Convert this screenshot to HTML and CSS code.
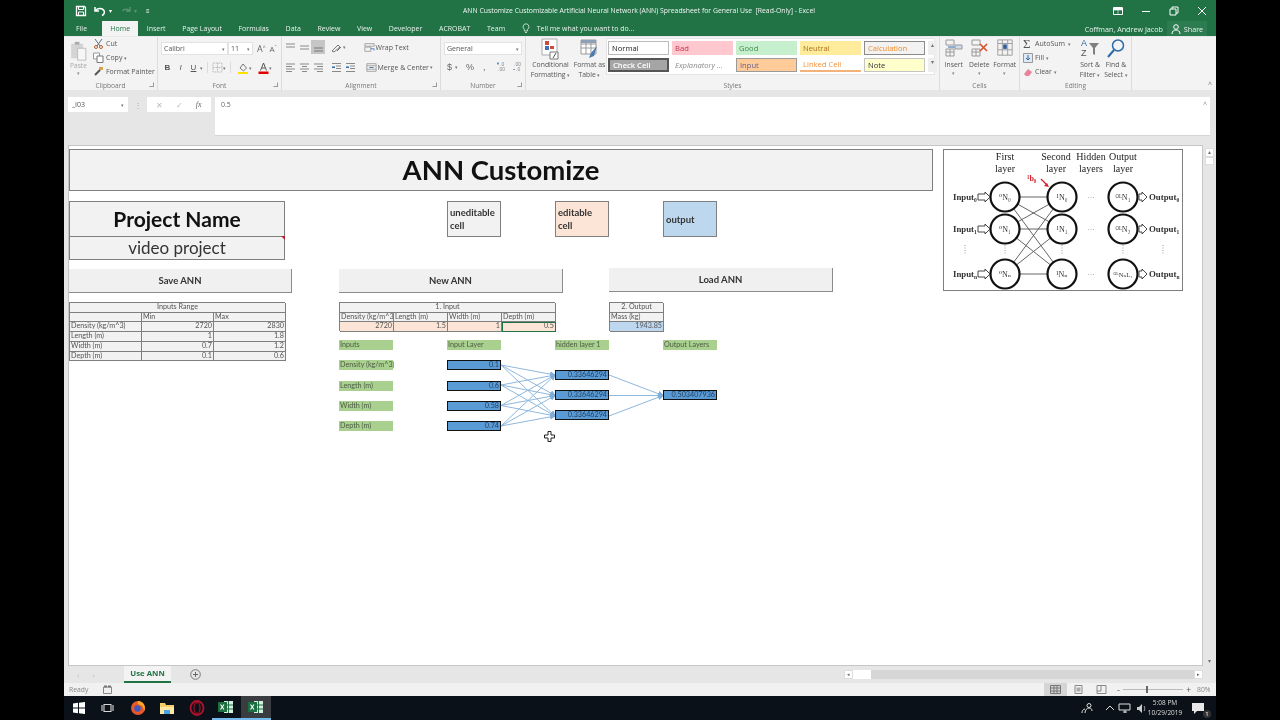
FILE: index.html
```html
<!DOCTYPE html>
<html lang="en">
<head>
<meta charset="utf-8">
<title>ANN Customize - Excel</title>
<link rel="stylesheet" href="styles.css">
</head>
<body>
<div class="app">
  <header class="titlebar">
    <div class="qat">
      <svg width="12" height="12" viewBox="0 0 12 12"><path d="M1.500 1.500h8l1 1v8h-9z" fill="none" stroke="#fff" stroke-width="1.300"/><path d="M3.500 2v2.500h5V2M3.500 10.500V7h5v3.500" fill="none" stroke="#fff"/></svg>
      <svg class="undo" width="14" height="12" viewBox="0 0 14 12"><path d="M2 2v4h4M2.500 6C4 3 9 2.500 11 5.500c1 2 0 4-2 5" fill="none" stroke="#fff" stroke-width="1.500"/></svg>
      <span class="caret-w">▾</span>
      <svg class="redo" width="12" height="12" viewBox="0 0 12 12"><path d="M10 2v4H6M9.500 6C8 3.500 4 3.500 2.500 6" fill="none" stroke="#5f9378" stroke-width="1.300"/></svg>
      <span class="caret-dim">▾</span>
      <span class="caret-w qat-more">≡</span>
    </div>
    <div class="doc-title">ANN Customize Customizable Artificial Neural Network (ANN) Spreadsheet for General Use&nbsp; [Read-Only] - Excel</div>
    <div class="winctl">
      <svg width="10" height="10" viewBox="0 0 10 10"><path d="M.5 1.500h9v7h-9z" fill="none" stroke="#fff"/><path d="M1 2h8v2H1zM5 4v4" fill="#fff" stroke="#fff" stroke-width=".6"/></svg>
      <svg width="10" height="10" viewBox="0 0 10 10"><path d="M1 5.500h8" stroke="#fff"/></svg>
      <svg width="10" height="10" viewBox="0 0 10 10"><path d="M1 3h6v6H1zM3 3V1h6v6H7" fill="none" stroke="#fff"/></svg>
      <svg width="10" height="10" viewBox="0 0 10 10"><path d="M1 1l8 8M9 1L1 9" stroke="#fff"/></svg>
    </div>
  </header>

  <nav class="tabs">
    <span class="tab tab-file">File</span>
    <span class="tab tab-active">Home</span>
    <span class="tab">Insert</span>
    <span class="tab">Page Layout</span>
    <span class="tab">Formulas</span>
    <span class="tab">Data</span>
    <span class="tab">Review</span>
    <span class="tab">View</span>
    <span class="tab">Developer</span>
    <span class="tab">ACROBAT</span>
    <span class="tab">Team</span>
    <span class="tab tell">
      <svg width="8" height="11" viewBox="0 0 8 11"><path d="M4 .8a3 3 0 0 0-1.600 5.500V8h3.200V6.300A3 3 0 0 0 4 .8zM3 9.500h2" fill="none" stroke="#e4efe9" stroke-width=".8"/></svg>
      Tell me what you want to do...
    </span>
    <span class="user">Coffman, Andrew Jacob</span>
    <span class="share">
      <svg width="10" height="10" viewBox="0 0 10 10"><circle cx="5" cy="3" r="2.300" fill="none" stroke="#fff"/><path d="M1 10c0-3 2-4 4-4s4 1 4 4" fill="none" stroke="#fff"/></svg>
      Share
    </span>
  </nav>

  <section class="ribbon">
    <div class="group g-clipboard">
      <div class="group-body">
        <div class="paste">
          <svg width="17" height="22" viewBox="0 0 18 24"><path d="M1 4h13v16H1z" fill="#d4d4d4"/><path d="M5 2h5v3H5z" fill="#aaa"/><path d="M8 9h9v13H8z" fill="#f6f6f6" stroke="#bbb"/></svg>
          <span>Paste</span>
          <span class="tiny-caret">▾</span>
        </div>
        <div class="rows clip-rows">
          <div class="cmd"><svg width="11" height="11" viewBox="0 0 11 11"><path d="M2 1l5 7M9 1L4 8" stroke="#5a6f8a"/><circle cx="3" cy="9" r="1.500" fill="none" stroke="#b06030"/><circle cx="8" cy="9" r="1.500" fill="none" stroke="#b06030"/></svg>Cut</div>
          <div class="cmd"><svg width="11" height="11" viewBox="0 0 11 11"><path d="M.5 1h6v6h-6z" fill="#fff" stroke="#999"/><path d="M4 4h6v6.500H4z" fill="#fff" stroke="#777"/></svg>Copy <i class="dd">▾</i></div>
          <div class="cmd"><svg width="11" height="11" viewBox="0 0 11 11"><path d="M6 1h4v3H6z" fill="#d9a441"/><path d="M7 4L2 9" stroke="#555" stroke-width="2"/></svg>Format Painter</div>
        </div>
      </div>
      <div class="group-label">Clipboard<i class="launcher"></i></div>
    </div>

    <div class="group g-font">
      <div class="group-body rows">
        <div class="inline">
          <span class="field f-font">Calibri<i class="dd">▾</i></span>
          <span class="field f-size">11<i class="dd">▾</i></span>
          <span class="glyph grow">A<sup>^</sup></span>
          <span class="glyph shrink">A<sup>ˇ</sup></span>
        </div>
        <div class="inline font-row2">
          <b class="fmt">B</b><i class="fmt">I</i><u class="fmt">U</u><i class="dd">▾</i>
          <span class="vsep"></span>
          <svg width="11" height="11" viewBox="0 0 11 11"><path d="M1 1h9v9H1zM5.500 1v9M1 5.500h9" fill="none" stroke="#bbb" stroke-dasharray="1 .5"/></svg><i class="dd">▾</i>
          <span class="vsep vsep-wide"></span>
          <svg width="12" height="12" viewBox="0 0 12 12"><path d="M3 6l3-4 3.500 4-3 3z" fill="none" stroke="#777"/><path d="M1 10h10v2H1z" fill="#ffe100"/></svg><i class="dd">▾</i>
          <svg class="fc" width="11" height="12" viewBox="0 0 11 12"><path d="M2.500 8.500L5.500 1l3 7.500M4 6h3" fill="none" stroke="#555"/><path d="M.5 9.500h10V12H.5z" fill="#e00000"/></svg><i class="dd">▾</i>
        </div>
      </div>
      <div class="group-label">Font<i class="launcher"></i></div>
    </div>

    <div class="group g-align">
      <div class="group-body rows">
        <div class="inline al-row">
          <svg class="al" width="11" height="11" viewBox="0 0 11 11"><path d="M1 2h9M1 5h9" stroke="#8a8a8a"/></svg>
          <svg class="al" width="11" height="11" viewBox="0 0 11 11"><path d="M1 4h9M1 7h9" stroke="#8a8a8a"/></svg>
          <span class="al-on"><svg width="11" height="11" viewBox="0 0 11 11"><path d="M1 6h9M1 9h9" stroke="#777"/></svg></span>
          <svg class="orient" width="13" height="11" viewBox="0 0 13 11"><path d="M2 9l6-6 2 2-6 5zM7 9l4-4" fill="none" stroke="#777"/></svg><i class="dd">▾</i>
          <span class="cmd wrap"><svg width="11" height="11" viewBox="0 0 13 11"><path d="M1 1h11v3H1zM1 5h7v5H1z" fill="none" stroke="#999"/><path d="M8 7h4v2" fill="none" stroke="#3a7ab8"/></svg>Wrap Text</span>
        </div>
        <div class="inline al-row">
          <svg class="al" width="11" height="11" viewBox="0 0 11 11"><path d="M1 2h9M1 4.500h6M1 7h9M1 9.500h6" stroke="#8a8a8a"/></svg>
          <svg class="al" width="11" height="11" viewBox="0 0 11 11"><path d="M1 2h9M3 4.500h5M1 7h9M3 9.500h5" stroke="#8a8a8a"/></svg>
          <svg class="al" width="11" height="11" viewBox="0 0 11 11"><path d="M1 2h9M4 4.500h6M1 7h9M4 9.500h6" stroke="#8a8a8a"/></svg>
          <svg class="al ind" width="11" height="11" viewBox="0 0 11 11"><path d="M1 1.500h9M5 4h5M5 6.500h5M1 9.500h9" stroke="#888"/><path d="M4 5.200H1" stroke="#2c6aa8" stroke-width="1.500"/></svg>
          <svg class="al" width="11" height="11" viewBox="0 0 11 11"><path d="M1 1.500h9M5 4h5M5 6.500h5M1 9.500h9" stroke="#888"/><path d="M1 5.200h3" stroke="#2c6aa8" stroke-width="1.500"/></svg>
          <span class="cmd merge"><svg width="11" height="11" viewBox="0 0 13 11"><path d="M1 1h11v9H1zM1 3.500h11M1 7.500h11" fill="none" stroke="#999"/><path d="M4 5.500h5" stroke="#2c6aa8"/></svg>Merge &amp; Center <i class="dd">▾</i></span>
        </div>
      </div>
      <div class="group-label">Alignment<i class="launcher"></i></div>
    </div>

    <div class="group g-number">
      <div class="group-body rows">
        <div class="inline"><span class="field f-general">General<i class="dd">▾</i></span></div>
        <div class="inline num-row">
          <span class="numg">$</span><i class="dd">▾</i>
          <span class="numg pct">%</span>
          <span class="numg comma">,</span>
          <svg class="dec" width="12" height="11" viewBox="0 0 12 11"><text x="3" y="5">.0</text><text x="1" y="10">.00</text><path d="M1 1v3M0 2.500h2" stroke="#2c6aa8" stroke-width=".6"/></svg>
          <svg class="dec" width="12" height="11" viewBox="0 0 12 11"><text x="1" y="5">.00</text><text x="3" y="10">.0</text><path d="M0 8.500h2" stroke="#2c6aa8" stroke-width=".6"/></svg>
        </div>
      </div>
      <div class="group-label">Number<i class="launcher"></i></div>
    </div>

    <div class="group g-styles">
      <div class="group-body">
        <div class="big big-cf">
          <svg width="20" height="22" viewBox="0 0 20 22"><path d="M1 1h15v16H1z" fill="#fff" stroke="#aaa"/><path d="M4 3h4v4H4z" fill="#d04a3c"/><path d="M4 8h4v4H4z" fill="#3e72b5"/><path d="M9 8h4v3H9z" fill="#d04a3c"/><path d="M9 14h8v7H9z" fill="#fff" stroke="#777"/><path d="M15 15l-3 5" stroke="#555"/></svg>
          <span>Conditional</span><span>Formatting <i class="dd">▾</i></span>
        </div>
        <div class="big big-ft">
          <svg width="20" height="22" viewBox="0 0 20 22"><path d="M1 2h15v14H1zM1 6h15M1 10h15M6 2v14M11 2v14" fill="#fff" stroke="#999"/><path d="M1 2h15v3H1z" fill="#8f9fb8"/><path d="M17 8l-6 7-2 5 5-2z" fill="#4a7ab0"/></svg>
          <span>Format as</span><span>Table <i class="dd">▾</i></span>
        </div>
        <div class="gallery">
          <div class="style s-normal">Normal</div>
          <div class="style s-bad">Bad</div>
          <div class="style s-good">Good</div>
          <div class="style s-neutral">Neutral</div>
          <div class="style s-calc">Calculation</div>
          <div class="gal-scroll gs-top">▴</div>
          <div class="style s-check">Check Cell</div>
          <div class="style s-expl">Explanatory ...</div>
          <div class="style s-input">Input</div>
          <div class="style s-linked">Linked Cell</div>
          <div class="style s-note">Note</div>
          <div class="gal-scroll gs-bottom">▾</div>
        </div>
      </div>
      <div class="group-label">Styles</div>
    </div>

    <div class="group g-cells">
      <div class="group-body">
        <div class="big big-cell">
          <svg width="18" height="18" viewBox="0 0 18 18"><path d="M1 1h8v5H1zM1 10h8v7H1zM5 10v7M1 13h8" fill="none" stroke="#999"/><path d="M3 8h10" stroke="#2c6aa8"/><path d="M10 6h7v4h-7z" fill="#cfdcee" stroke="#999"/></svg>
          <span>Insert</span><span class="tiny-caret">▾</span>
        </div>
        <div class="big big-cell">
          <svg width="20" height="18" viewBox="0 0 20 18"><path d="M3 1h8v5H3zM3 10h8v7H3zM7 10v7M3 13h8" fill="none" stroke="#999"/><path d="M11 5l7 7M18 5l-7 7" stroke="#d4502a" stroke-width="1.600"/></svg>
          <span>Delete</span><span class="tiny-caret">▾</span>
        </div>
        <div class="big big-cell">
          <svg width="18" height="18" viewBox="0 0 18 20"><path d="M1 1h16v17H1zM1 5h16M1 12h16M6 1v17M12 1v17" fill="none" stroke="#999"/><path d="M7 6h4v5H7z" fill="#2c5d9b"/></svg>
          <span>Format</span><span class="tiny-caret">▾</span>
        </div>
      </div>
      <div class="group-label">Cells</div>
    </div>

    <div class="group g-edit">
      <div class="group-body">
        <div class="rows edit-rows">
          <div class="cmd"><span class="sigma">Σ</span>AutoSum <i class="dd">▾</i></div>
          <div class="cmd"><svg width="10" height="10" viewBox="0 0 10 10"><path d="M.5.500h9v9h-9z" fill="#dfe8f3" stroke="#999"/><path d="M5 2v5M3 5l2 2 2-2" fill="none" stroke="#2c6aa8"/></svg>Fill <i class="dd">▾</i></div>
          <div class="cmd"><svg width="10" height="10" viewBox="0 0 10 10"><path d="M1 7l4-5 4 3-3 4H3z" fill="#e8839a"/></svg>Clear <i class="dd">▾</i></div>
        </div>
        <div class="big big-edit">
          <svg width="20" height="20" viewBox="0 0 20 20"><text class="az a" x="1" y="8">A</text><text class="az z" x="1" y="18">Z</text><path d="M9 5h10l-4 5v7l-2-1v-6z" fill="#7f7f7f"/></svg>
          <span>Sort &amp;</span><span>Filter <i class="dd">▾</i></span>
        </div>
        <div class="big big-edit">
          <svg width="20" height="20" viewBox="0 0 20 20"><circle cx="12" cy="7.500" r="5.500" fill="none" stroke="#2c6aa8" stroke-width="1.500"/><path d="M8 12l-6 7" stroke="#2c6aa8" stroke-width="2"/></svg>
          <span>Find &amp;</span><span>Select <i class="dd">▾</i></span>
        </div>
      </div>
      <div class="group-label">Editing</div>
    </div>
    <span class="collapse">^</span>
  </section>

  <section class="formula">
    <div class="namebox">_I03<i class="dd">▾</i></div>
    <span class="fx-grip">⋮</span>
    <div class="fxbox"><span>✕</span><span>✓</span><em>fx</em></div>
    <div class="fxinput">0.5<span class="fx-up">^</span></div>
  </section>

  <main class="sheet">
    <div class="canvas">
      <div class="board-main">
        <h1 class="banner">ANN Customize</h1>

        <div class="upper">
          <div class="project">
            <div class="project-title">Project Name</div>
            <div class="project-name">video project<i class="note-mark"></i></div>
          </div>
          <div class="key key-gray">uneditable<br>cell</div>
          <div class="key key-peach">editable<br>cell</div>
          <div class="key key-blue">output</div>
        </div>

        <div class="lower">
          <div class="left-col">
            <div class="sheet-btn btn-save">Save ANN</div>
            <div class="xtable range">
              <div class="cell head span3">Inputs Range</div>
              <div class="cell"></div><div class="cell">Min</div><div class="cell">Max</div>
              <div class="cell">Density (kg/m^3)</div><div class="cell num">2720</div><div class="cell num">2830</div>
              <div class="cell">Length (m)</div><div class="cell num">1</div><div class="cell num">1.8</div>
              <div class="cell">Width (m)</div><div class="cell num">0.7</div><div class="cell num">1.2</div>
              <div class="cell">Depth (m)</div><div class="cell num">0.1</div><div class="cell num">0.6</div>
            </div>
          </div>

          <div class="right-col">
            <div class="btn-row">
              <div class="sheet-btn btn-new">New ANN</div>
              <div class="sheet-btn btn-load">Load ANN</div>
            </div>
            <div class="table-row">
              <div class="xtable input">
                <div class="cell head span4">1. Input</div>
                <div class="cell clip">Density (kg/m^3</div><div class="cell">Length (m)</div><div class="cell">Width (m)</div><div class="cell">Depth (m)</div>
                <div class="cell num peach">2720</div><div class="cell num peach">1.5</div><div class="cell num peach">1</div><div class="cell num peach selected">0.5</div>
              </div>
              <div class="xtable output">
                <div class="cell head">2. Output</div>
                <div class="cell">Mass (kg)</div>
                <div class="cell num blue">1943.85</div>
              </div>
            </div>

            <div class="net">
              <svg class="wires" width="380" height="100" viewBox="0 0 380 100">
                <defs><marker id="ah" markerWidth="6" markerHeight="6" refX="5" refY="3" orient="auto"><path d="M0 0l6 3-6 3z" fill="#7fadd8"/></marker></defs>
                <g stroke="#8fb8de" stroke-width="1" fill="none" marker-end="url(#ah)">
                  <path d="M162 25L216 35"/><path d="M162 25L216 55.500"/><path d="M162 25L216 76"/>
                  <path d="M162 45L216 35"/><path d="M162 45L216 55.500"/><path d="M162 45L216 76"/>
                  <path d="M162 65.500L216 35"/><path d="M162 65.500L216 55.500"/><path d="M162 65.500L216 76"/>
                  <path d="M162 86L216 35"/><path d="M162 86L216 55.500"/><path d="M162 86L216 76"/>
                  <path d="M270 35L324 55.500"/><path d="M270 55.500L324 55.500"/><path d="M270 76L324 55.500"/>
                </g>
              </svg>
              <div class="net-col">
                <div class="tag">Inputs</div>
                <div class="tag">Density (kg/m^3)</div>
                <div class="tag">Length (m)</div>
                <div class="tag">Width (m)</div>
                <div class="tag">Depth (m)</div>
              </div>
              <div class="net-col">
                <div class="tag">Input Layer</div>
                <div class="node">0.1</div>
                <div class="node">0.6</div>
                <div class="node">0.58</div>
                <div class="node">0.74</div>
              </div>
              <div class="net-col hidden-col">
                <div class="tag">hidden layer 1</div>
                <div class="node first">0.33646294</div>
                <div class="node">0.33646294</div>
                <div class="node">0.33646294</div>
              </div>
              <div class="net-col output-col">
                <div class="tag">Output Layers</div>
                <div class="node first">0.503407936</div>
              </div>
            </div>
          </div>
        </div>
      </div>

      <figure class="diagram">
        <svg width="240" height="142" viewBox="0 0 240 142">
          <g stroke="#555" stroke-width=".9">
            <path d="M62 48H119M62 48L119 80M62 48L119 125M62 80H119M62 80L119 48M62 80L119 125M62 125H119M62 125L119 48M62 125L119 80"/>
          </g>
          <g class="ncirc" fill="#fff" stroke="#111" stroke-width="2.200">
            <circle cx="62" cy="48" r="14.500"/><circle cx="62" cy="80" r="14.500"/><circle cx="62" cy="125" r="14.500"/>
            <circle cx="119" cy="48" r="14.500"/><circle cx="119" cy="80" r="14.500"/><circle cx="119" cy="125" r="14.500"/>
            <circle cx="180" cy="48" r="14.500"/><circle cx="180" cy="80" r="14.500"/><circle cx="180" cy="125" r="14.500"/>
          </g>
          <g class="arrows" fill="#fff" stroke="#333" stroke-width=".9">
            <path d="M35 45h7v-2l5 5-5 5v-2h-7z"/><path d="M35 77h7v-2l5 5-5 5v-2h-7z"/><path d="M35 122h7v-2l5 5-5 5v-2h-7z"/>
            <path d="M196 45h3v-2l5 5-5 5v-2h-3z"/><path d="M196 77h3v-2l5 5-5 5v-2h-3z"/><path d="M196 122h3v-2l5 5-5 5v-2h-3z"/>
          </g>
          <g class="dg-head" text-anchor="middle">
            <text x="62" y="11">First</text><text x="62" y="23">layer</text>
            <text x="113" y="11">Second</text><text x="113" y="23">layer</text>
            <text x="148" y="11">Hidden</text><text x="148" y="23">layers</text>
            <text x="180" y="11">Output</text><text x="180" y="23">layer</text>
          </g>
          <g class="dg-io">
            <text x="10" y="51">Input<tspan class="sub" dy="1.500">0</tspan></text>
            <text x="10" y="83">Input<tspan class="sub" dy="1.500">1</tspan></text>
            <text x="10" y="128">Input<tspan class="sub" dy="1.500">n</tspan></text>
            <text x="206" y="51">Output<tspan class="sub" dy="1.500">0</tspan></text>
            <text x="206" y="83">Output<tspan class="sub" dy="1.500">1</tspan></text>
            <text x="206" y="128">Output<tspan class="sub" dy="1.500">n</tspan></text>
          </g>
          <g class="dg-n" text-anchor="middle">
            <text x="62" y="51">⁰N₀</text><text x="62" y="83">⁰N₁</text><text x="62" y="128">⁰Nₙ</text>
            <text x="119" y="51">¹N₀</text><text x="119" y="83">¹N₁</text><text x="119" y="128">¹Nₙ</text>
            <text x="180" y="51">ᴼᴸN₁</text><text x="180" y="83">ᴼᴸN₂</text><text class="dg-tight" x="180" y="128">ᴼᴸNₙL₁</text>
            <text class="dots" x="148" y="51">···</text><text class="dots" x="148" y="83">···</text><text class="dots" x="148" y="128">···</text>
          </g>
          <g class="dg-dots" stroke="#999" stroke-dasharray="1 1.500">
            <path d="M22 96v10M62 96v10M119 96v10M180 96v10M220 96v10"/>
          </g>
          <text class="dg-red" x="84" y="32">¹b₀</text>
          <path d="M98 30l6 6" stroke="#d3202e" stroke-width="1.200"/><path d="M106 38l-5-1 3-3z" fill="#d3202e"/>
        </svg>
      </figure>

      <svg class="cell-cursor" width="11" height="11" viewBox="0 0 11 11"><path d="M4 .5h3v3.500h3.500v3H7v3.500H4V7H.5V4H4z" fill="#fff" stroke="#222"/></svg>
    </div>
    <aside class="vscroll">
      <span class="sb-btn">▴</span>
      <span class="sb-thumb"></span>
      <span class="sb-fill"></span>
      <span class="sb-down">▾</span>
    </aside>
  </main>

  <div class="sheetbar">
    <span class="nav-arrows"><i>‹</i><i>›</i></span>
    <span class="sheet-tab">Use ANN</span>
    <svg class="add-sheet" width="11" height="11" viewBox="0 0 11 11"><circle cx="5.500" cy="5.500" r="4.800" fill="none" stroke="#777"/><path d="M5.500 3v5M3 5.500h5" stroke="#666"/></svg>
    <div class="hscroll">
      <span class="hs-btn">◂</span><span class="hs-thumb"></span><span class="hs-track"></span><span class="hs-btn">▸</span>
    </div>
  </div>

  <footer class="status">
    <span class="ready">Ready</span>
    <svg class="macro" width="9" height="9" viewBox="0 0 9 9"><path d="M.5 2h8v6.500h-8z" fill="none" stroke="#888"/><path d="M1 .5h3v2H1zM5 .5h3v2H5z" fill="#777"/></svg>
    <div class="views">
      <span class="view on"><svg width="11" height="9" viewBox="0 0 11 9"><path d="M.5.500h10v8H.5zM.5 3h10M.5 6h10M4 .5v8M7 .5v8" fill="none" stroke="#777"/></svg></span>
      <span class="view"><svg width="11" height="9" viewBox="0 0 11 9"><path d="M2 .5h7v8H2z" fill="none" stroke="#888"/><path d="M3.500 2.500h4v4h-4z" fill="#aaa"/></svg></span>
      <span class="view"><svg width="11" height="9" viewBox="0 0 11 9"><path d="M1 .5h9v8H1zM1 6h4V.5" fill="none" stroke="#888"/></svg></span>
    </div>
    <div class="zoomer">
      <span>-</span>
      <div class="slider"><i></i></div>
      <span>+</span>
    </div>
    <span class="pct-zoom">80%</span>
  </footer>

  <div class="taskbar">
    <div class="task-left">
      <span class="task"><svg width="14" height="14" viewBox="0 0 14 14"><path d="M1 2.500l5-.7V6.500H1zM7 1.700L13 1v5.500H7zM1 7.500h5v4.700l-5-.7zM7 7.500h6V13l-6-.8z" fill="#fff"/></svg></span>
      <span class="task"><svg width="14" height="12" viewBox="0 0 14 12"><path d="M3 2.500h7v7H3zM1 3v6M12 3v6" fill="none" stroke="#d8d8d8" stroke-width="1.100"/></svg></span>
      <span class="task"><svg width="16" height="16" viewBox="0 0 16 16"><circle cx="8" cy="8" r="7" fill="#e8562a"/><path d="M8 1a7 7 0 0 1 7 7c0 2-1 3-1 3s0-5-4-6-2-4-2-4z" fill="#f9a825"/><circle cx="7.500" cy="8.500" r="3.200" fill="#3a5bbf"/></svg></span>
      <span class="task"><svg width="16" height="14" viewBox="0 0 16 14"><path d="M1 2h5l1 2h8v9H1z" fill="#f3cf6a"/><path d="M1 6h14v7H1z" fill="#ffe9a0"/><path d="M5 9h6v4H5z" fill="#4aa3df"/></svg></span>
      <span class="task"><svg width="16" height="16" viewBox="0 0 16 16"><ellipse cx="8" cy="8" rx="6.500" ry="7" fill="none" stroke="#b3112c" stroke-width="1.800"/><ellipse cx="8" cy="8" rx="3" ry="5.500" fill="none" stroke="#8e0f26" stroke-width="1.400"/></svg></span>
      <span class="task running"><svg width="16" height="14" viewBox="0 0 16 14"><path d="M6 1h9v12H6z" fill="#d8ebe0"/><path d="M10.500 1v12M6 5h9M6 9h9" stroke="#1d6f42"/><path d="M0 2h9v10H0z" fill="#1d6f42"/><path d="M2.500 4.500l3.500 5M6 4.500l-3.500 5" stroke="#fff" stroke-width="1.100"/></svg></span>
      <span class="task running active"><svg width="16" height="14" viewBox="0 0 16 14"><path d="M6 1h9v12H6z" fill="#d8ebe0"/><path d="M10.500 1v12M6 5h9M6 9h9" stroke="#1d6f42"/><path d="M0 2h9v10H0z" fill="#1d6f42"/><path d="M2.500 4.500l3.500 5M6 4.500l-3.500 5" stroke="#fff" stroke-width="1.100"/></svg></span>
    </div>
    <div class="tray">
      <svg class="tray-people" width="12" height="12" viewBox="0 0 12 12"><circle cx="8" cy="3.500" r="2" fill="none" stroke="#ddd"/><path d="M4 11c0-3 2-5 4-5s3 1 3 3M1 11c0-2 1-4 3-4" fill="none" stroke="#ddd"/></svg>
      <svg class="tray-up" width="10" height="6" viewBox="0 0 10 6"><path d="M1 5l4-4 4 4" fill="none" stroke="#ddd"/></svg>
      <svg class="tray-net" width="13" height="11" viewBox="0 0 13 11"><path d="M1 1h11v6H1zM5 9h4M7 7v3" fill="none" stroke="#ddd"/></svg>
      <svg class="tray-vol" width="11" height="11" viewBox="0 0 11 11"><path d="M1 4h2l3-3v9L3 7H1z" fill="#ccc"/><path d="M8 3c1 1.500 1 3.500 0 5" fill="none" stroke="#aaa"/></svg>
      <div class="clock"><span>5:08 PM</span><span>10/29/2019</span></div>
      <span class="notif"><svg width="14" height="13" viewBox="0 0 14 13"><path d="M1 1h12v8H6l-3 3V9H1z" fill="#e6e6e6"/></svg><i>1</i></span>
    </div>
  </div>
</div>
</body>
</html>
```

FILE: styles.css
```css
* { box-sizing: border-box; }
html, body { margin: 0; height: 100%; background: #000; overflow: hidden; }
body { font-family: "Open Sans", "Liberation Sans", sans-serif; color: #555; }
svg { display: block; flex: none; }
i.dd { font-style: normal; font-size: 5px; color: #777; }

.app { width: 1152px; height: 720px; margin-left: 64px; display: flex; flex-direction: column; background: #e6e6e6; filter: blur(.35px); }

/* Title bar and tabs */
.titlebar { height: 21px; background: #217346; color: #f1f6f3; display: grid; grid-template-columns: 1fr auto 1fr; align-items: center; }
.qat { display: flex; align-items: center; padding-left: 11px; gap: 2px; }
.undo { margin-left: 4px; }
.redo { margin-left: 6px; }
.caret-w { color: #fff; font-size: 6px; }
.caret-dim { color: #5f9378; font-size: 6px; }
.qat-more { margin-left: 7px; }
.doc-title { font-size: 6.850px; white-space: nowrap; transform: translateX(-1px); }
.winctl { display: flex; justify-content: flex-end; gap: 18px; padding-right: 9px; }

.tabs { height: 15px; background: #217346; color: #e8f1ec; display: flex; align-items: center; font-size: 7px; }
.tab { padding: 0 8.300px; line-height: 15px; white-space: nowrap; }
.tab-file { margin-left: 3.700px; margin-right: 6.700px; }
.tab-active { background: #f3f3f3; color: #217346; }
.tell { display: flex; align-items: center; gap: 7px; }
.user { margin-left: auto; margin-right: 4px; font-size: 7.200px; }
.share { width: 40px; height: 15px; background: #2d7c51; display: flex; align-items: center; justify-content: center; gap: 3px; margin-right: 9px; font-size: 7.200px; }

/* Ribbon */
.ribbon { height: 54px; background: #f3f3f3; display: flex; position: relative; border-top: 1px solid #e8e8e8; font-size: 7px; }
.group { display: flex; flex-direction: column; border-right: 1px solid #dcdcdc; flex: none; }
.group-body { flex: 1; display: flex; min-height: 0; }
.group-label { height: 11px; padding-top: 2px; text-align: center; font-size: 6.600px; line-height: 9px; color: #777; position: relative; }
.launcher { position: absolute; right: 3px; top: 3px; width: 5px; height: 5px; border: 1px solid #999; border-top-color: transparent; border-left-color: transparent; }
.rows { display: flex; flex-direction: column; }
.inline { display: flex; align-items: center; }
.cmd { display: flex; align-items: center; gap: 2px; white-space: nowrap; color: #555; }
.field { background: #fff; border: 1px solid #e2e2e2; height: 13px; display: flex; align-items: center; justify-content: space-between; padding: 0 2px; font-size: 7px; }

.g-clipboard { width: 94px; }
.paste { width: 29px; padding-top: 3px; display: flex; flex-direction: column; align-items: center; color: #a8a8a8; font-size: 6.600px; line-height: 8px; }
.tiny-caret { font-size: 5px; color: #888; line-height: 7px; }
.clip-rows { padding-top: 1px; gap: 3px; }
.clip-rows .cmd { height: 11px; }

.g-font { width: 124px; }
.g-font .group-body { padding: 5px 0 0 3px; gap: 6px; }
.f-font { width: 67px; }
.f-size { width: 25px; }
.glyph { font-size: 9px; color: #666; line-height: 10px; }
.glyph sup { font-size: 5px; vertical-align: 3px; line-height: 0; }
.grow { margin-left: 4px; }
.shrink { margin-left: 4px; font-size: 8px; }
.font-row2 { height: 13px; }
.fmt { width: 13px; text-align: center; font-size: 8px; font-family: "Liberation Sans", sans-serif; color: #555; }
.vsep { width: 1px; height: 11px; background: #dcdcdc; margin: 0 4px; }
.vsep-wide { margin: 0 6px 0 4px; }
.fc { margin-left: 5.500px; }

.g-align { width: 159px; }
.g-align .group-body { padding: 3px 0 0 1px; gap: 6px; }
.al-row { height: 14px; }
.al { margin: 0 1.500px; }
.al-on { width: 14px; height: 14px; background: #c6c6c6; display: flex; align-items: center; justify-content: center; }
.orient { margin-left: 4.500px; }
.wrap { margin-left: 18px; gap: 1px; }
.ind { margin-left: 5.500px; }
.merge { margin-left: 8.500px; gap: 1px; }

.g-number { width: 85px; }
.g-number .group-body { padding: 5px 0 0 3px; gap: 5px; }
.f-general { width: 78px; }
.num-row { padding-left: 3px; height: 13px; gap: 3px; }
.numg { font-size: 9px; color: #666; font-family: "Liberation Sans", sans-serif; }
.pct { margin-left: 5px; }
.comma { margin-left: 6px; margin-right: 8px; }
.dec { margin-right: 1px; }
.dec text { font: 5px "Liberation Sans", sans-serif; fill: #888; }

.g-styles { width: 414px; }
.g-styles .group-body { padding-top: 1px; }
.big { display: flex; flex-direction: column; align-items: center; line-height: 9.500px; font-size: 6.800px; white-space: nowrap; color: #555; }
.big-cf { width: 47px; padding-left: 2px; }
.big-ft { width: 33px; }
.gallery { width: 329px; height: 37px; background: #fff; border: 1px solid #e4e4e4; display: grid; grid-template-columns: repeat(5, 61px) 9px; column-gap: 3px; row-gap: 3px; padding: 2px 0 0 1px; grid-template-rows: 14px 14px; font-size: 7.600px; }
.style { display: flex; align-items: center; padding-left: 3px; white-space: nowrap; overflow: hidden; }
.s-normal { background: #fff; color: #222; border: 1px solid #bbb; }
.s-bad { background: #ffc7ce; color: #c4354a; }
.s-good { background: #c6efce; color: #3e8a4e; }
.s-neutral { background: #ffeb9c; color: #a7701a; }
.s-calc { background: #f2f2f2; color: #f08a24; border: 1px solid #8a8a8a; }
.s-check { background: #a5a5a5; color: #fff; border: 2px solid #555; font-weight: 600; }
.s-expl { background: #fff; color: #8a8a8a; font-style: italic; }
.s-input { background: #ffcc99; color: #66608a; border: 1px solid #9a9a9a; }
.s-linked { background: #fff; color: #f0903a; border-bottom: 2px solid #f3b27a; }
.s-note { background: #ffffcc; color: #333; border: 1px solid #c4c4c4; }
.gal-scroll { background: #eee; font-size: 6px; text-align: center; color: #777; }

.g-cells { width: 80px; }
.g-cells .group-body { padding: 2px 0 0 1px; }
.big-cell { width: 25.500px; }
.big-cell svg { margin-bottom: 3px; }

.g-edit { width: 112px; }
.g-edit .group-body { padding-top: 1px; }
.edit-rows { width: 57px; padding-left: 3px; gap: 3px; }
.edit-rows .cmd { height: 11px; }
.edit-rows .cmd:first-child { gap: 3px; }
.sigma { font-size: 13px; color: #555; font-family: "Liberation Serif", serif; width: 9px; }
.big-edit { width: 26px; }
.big-edit svg { margin-bottom: 2px; }
.az { font-size: 9px; font-family: "Liberation Sans", sans-serif; }
.a { fill: #2c6aa8; }
.z { fill: #555; }
.collapse { position: absolute; right: 4px; bottom: 1px; font-size: 7px; color: #777; }

/* Formula bar */
.formula { height: 55px; padding: 7px 6px 0 4px; display: flex; align-items: flex-start; background: #e6e6e6; }
.namebox { width: 60px; height: 15px; background: #fff; display: flex; align-items: center; justify-content: space-between; padding: 0 4px; font-size: 7px; }
.fx-grip { width: 19px; text-align: center; font-size: 8px; line-height: 15px; color: #aaa; }
.fxbox { width: 64px; height: 15px; background: #fff; display: flex; align-items: center; justify-content: space-around; padding: 0 3px; color: #bbb; font-size: 8px; }
.fxbox em { color: #666; font-family: "Liberation Serif", serif; }
.fxinput { width: 995px; height: 39px; margin-left: 4px; background: #fff; border-bottom: 1px solid #d4d4d4; padding: 3px 6px; font-size: 7px; color: #666; position: relative; }
.fx-up { position: absolute; right: 3px; top: 3px; color: #888; }

/* Sheet */
.sheet { height: 521px; display: flex; padding-left: 4px; }
.canvas { flex: 1; background: #fff; border: 1px solid #c6c6c6; padding: 3px 0 0 0; display: flex; gap: 10px; position: relative; font-family: Lato, "Liberation Sans", sans-serif; color: #444; }
.board-main { width: 864px; flex: none; }
.banner { margin: 0 0 10px; height: 42px; background: #f2f2f2; border: 1px solid #7f7f7f; font-size: 27.500px; line-height: 40px; font-weight: 700; text-align: center; color: #111; }

.upper { display: flex; height: 68px; align-items: flex-start; }
.project { width: 216px; margin-right: 162px; }
.project-title { height: 36px; background: #f2f2f2; border: 1px solid #7f7f7f; font-size: 21px; line-height: 34px; font-weight: 700; text-align: center; color: #111; }
.project-name { height: 23px; background: #f2f2f2; border: 1px solid #7f7f7f; border-top: 0; font-size: 17px; line-height: 22px; text-align: center; color: #333; position: relative; }
.note-mark { position: absolute; right: -1px; top: -1px; border: 2px solid transparent; border-top-color: #b3202e; border-right-color: #b3202e; }
.key { width: 54px; height: 36px; margin-right: 54px; border: 1px solid #7f7f7f; font-size: 9.500px; font-weight: 700; line-height: 13px; padding: 4px 2px 0; color: #333; white-space: nowrap; }
.key-gray { background: #f2f2f2; }
.key-peach { background: #fce4d6; }
.key-blue { background: #bdd7ee; padding-top: 11px; }

.lower { display: flex; }
.left-col { width: 270px; flex: none; }
.sheet-btn { height: 24px; background: #f0f0f0; border-right: 1px solid #8c8c8c; border-bottom: 1px solid #8c8c8c; font-size: 9.500px; font-weight: 700; line-height: 23px; text-align: center; color: #333; }
.btn-save { width: 223px; margin-bottom: 9px; }
.btn-row { display: flex; margin-bottom: 9px; }
.btn-new { width: 224px; margin-right: 46px; }
.btn-load { width: 224px; margin-top: -1px; margin-bottom: 1px; }

.xtable { display: grid; grid-auto-rows: 9.720px; border-top: 1px solid #7f7f7f; border-left: 1px solid #7f7f7f; font-size: 7.200px; background: #f2f2f2; color: #555; }
.range { width: 216px; grid-template-columns: 72px 72px 72px; }
.input { width: 216px; grid-template-columns: 54px 54px 54px 54px; margin-right: 54px; }
.output { width: 54px; grid-template-columns: 54px; }
.table-row { display: flex; height: 29px; margin-bottom: 9px; }
.cell { border-right: 1px solid #7f7f7f; border-bottom: 1px solid #7f7f7f; line-height: 8.700px; padding: 0 1px; white-space: nowrap; overflow: hidden; }
.head { text-align: center; }
.span3 { grid-column: span 3; }
.span4 { grid-column: span 4; }
.num { text-align: right; }
.peach { background: #fce4d6; }
.blue { background: #bdd7ee; }
.selected { outline: 1px solid #217346; outline-offset: -1px; }

.net { display: flex; position: relative; width: 378px; gap: 54px; }
.net-col { width: 54px; display: flex; flex-direction: column; gap: 10.150px; position: relative; font-size: 7.200px; }
.wires { position: absolute; left: 0; top: 0; overflow: visible; }
.tag { height: 10.150px; background: #a9d08e; line-height: 10px; padding: 0 1px; white-space: nowrap; color: #4d5d45; }
.node { height: 10.150px; background: #5b9bd5; border: 1px solid #111; border-width: 1.500px 1px; line-height: 7.500px; text-align: right; padding-right: 1px; color: #1e3d5c; white-space: nowrap; overflow: hidden; }
.hidden-col .first { margin-top: 9.500px; }
.output-col .first { margin-top: 29.800px; }

.diagram { margin: 0; width: 240px; height: 142px; border: 1px solid #7f7f7f; flex: none; position: relative; }
.diagram svg { position: absolute; left: -1px; top: -1px; }
.dg-head { font: 10px "Liberation Serif", serif; fill: #222; }
.dg-io { font: 700 8.800px "Liberation Serif", serif; fill: #333; }
.sub { font-size: 5.500px; }
.dg-n { font: 8px "Liberation Serif", "DejaVu Serif", serif; fill: #333; }
.dg-tight { font-size: 6.500px; }
.dots { fill: #888; }
.dg-red { font: 700 8px "Liberation Serif", "DejaVu Serif", serif; fill: #d3202e; }
.cell-cursor { position: absolute; left: 475px; top: 285px; }

.vscroll { width: 13px; background: #e6e6e6; display: flex; flex-direction: column; align-items: center; padding: 3px 0 0; font-size: 6px; color: #777; }
.sb-btn { width: 9px; height: 9px; background: #fff; border: 1px solid #ddd; text-align: center; line-height: 7px; }
.sb-thumb { width: 9px; height: 8px; background: #fff; border: 1px solid #ddd; }
.sb-fill { flex: 1; }
.sb-down { height: 9px; line-height: 9px; }

/* Sheet tabs and status */
.sheetbar { height: 17px; display: flex; align-items: stretch; background: #e6e6e6; padding-left: 12px; font-size: 8px; }
.nav-arrows { width: 48px; display: flex; align-items: center; gap: 13px; color: #bbb; padding-left: 1px; }
.nav-arrows i { font-style: normal; }
.sheet-tab { width: 47px; background: #f3f3f3; border-bottom: 2px solid #217346; color: #217346; font-weight: 700; text-align: center; line-height: 15px; font-family: "Open Sans", sans-serif; font-size: 7.800px; }
.add-sheet { align-self: center; margin-left: 19px; }
.hscroll { margin-left: auto; width: 359px; margin-right: 13px; display: flex; align-items: center; font-size: 5px; color: #666; }
.hs-btn { width: 9px; height: 9px; background: #fff; border: 1px solid #ddd; line-height: 7px; text-align: center; }
.hs-thumb { width: 18px; height: 9px; background: #fff; }
.hs-track { flex: 1; height: 9px; background: #d6d6d6; }

.status { height: 13px; background: #f1f1f1; display: flex; align-items: center; padding-left: 5px; font-size: 6.800px; color: #888; }
.macro { margin-left: 15px; }
.views { margin-left: auto; display: flex; align-self: stretch; }
.view { width: 23px; display: flex; align-items: center; justify-content: center; }
.on { background: #d5d5d5; }
.zoomer { display: flex; align-items: center; gap: 3px; width: 75px; margin-left: 4px; font-size: 9px; color: #555; }
.slider { width: 60px; height: 1px; background: #bbb; position: relative; }
.slider i { position: absolute; left: 23px; top: -3px; width: 2px; height: 7px; background: #666; }
.pct-zoom { width: 24px; padding-left: 5px; }

/* Taskbar */
.taskbar { height: 24px; background: #0a1118; display: flex; justify-content: space-between; color: #ddd; }
.task-left { display: flex; }
.task { width: 29.500px; height: 24px; display: flex; align-items: center; justify-content: center; }
.running { border-bottom: 2px solid #76b9ed; }
.active { background: #3a3d40; }
.tray { display: flex; align-items: center; padding-right: 7px; }
.tray-up { margin-left: 12px; }
.tray-net { margin-left: 3px; }
.tray-vol { margin-left: 5px; }
.clock { width: 46px; margin-left: -5px; display: flex; flex-direction: column; align-items: center; font-size: 6.500px; line-height: 10px; color: #ddd; }
.notif { position: relative; margin-left: 3px; width: 18px; }
.notif i { position: absolute; right: -2px; bottom: -3px; width: 8px; height: 8px; border-radius: 50%; background: #333; font-size: 6px; line-height: 8px; text-align: center; font-style: normal; color: #fff; }
```
